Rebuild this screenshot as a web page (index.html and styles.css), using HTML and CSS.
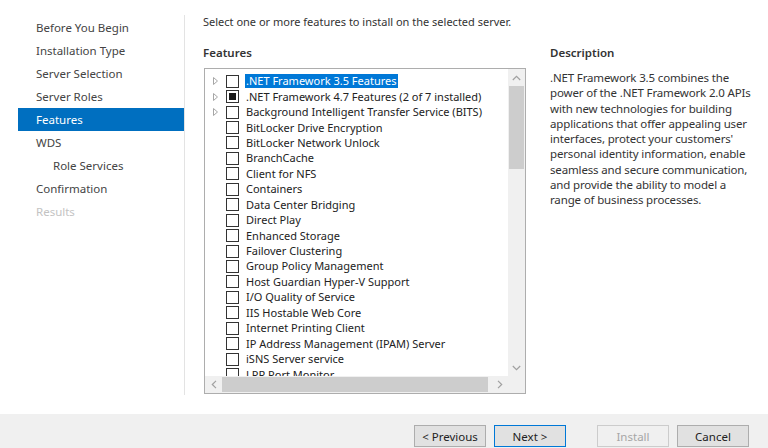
FILE: index.html
```html
<!DOCTYPE html>
<html>
<head>
<meta charset="utf-8">
<link rel="stylesheet" href="styles.css">
</head>
<body>
<div class="window">
  <div class="main">
    <nav class="steps">
      <div class="step">Before You Begin</div>
      <div class="step">Installation Type</div>
      <div class="step">Server Selection</div>
      <div class="step">Server Roles</div>
      <div class="step active">Features</div>
      <div class="step">WDS</div>
      <div class="step sub">Role Services</div>
      <div class="step">Confirmation</div>
      <div class="step disabled">Results</div>
    </nav>
    <section class="content">
      <p class="intro">Select one or more features to install on the selected server.</p>
      <div class="columns">
        <div class="features">
          <h2 class="heading">Features</h2>
          <div class="listbox">
            <div class="viewport">
              <ul class="tree">
                <li class="row"><span class="exp"><svg width="5" height="8" viewBox="0 0 5 8"><path d="M0.5 0.5 L4.5 4 L0.5 7.5 Z" fill="none" stroke="#a6a6a6"/></svg></span><span class="cb"></span><span class="label sel">.NET Framework 3.5 Features</span></li>
                <li class="row"><span class="exp"><svg width="5" height="8" viewBox="0 0 5 8"><path d="M0.5 0.5 L4.5 4 L0.5 7.5 Z" fill="none" stroke="#a6a6a6"/></svg></span><span class="cb partial"></span><span class="label">.NET Framework 4.7 Features (2 of 7 installed)</span></li>
                <li class="row"><span class="exp"><svg width="5" height="8" viewBox="0 0 5 8"><path d="M0.5 0.5 L4.5 4 L0.5 7.5 Z" fill="none" stroke="#a6a6a6"/></svg></span><span class="cb"></span><span class="label">Background Intelligent Transfer Service (BITS)</span></li>
                <li class="row"><span class="exp"></span><span class="cb"></span><span class="label">BitLocker Drive Encryption</span></li>
                <li class="row"><span class="exp"></span><span class="cb"></span><span class="label">BitLocker Network Unlock</span></li>
                <li class="row"><span class="exp"></span><span class="cb"></span><span class="label">BranchCache</span></li>
                <li class="row"><span class="exp"></span><span class="cb"></span><span class="label">Client for NFS</span></li>
                <li class="row"><span class="exp"></span><span class="cb"></span><span class="label">Containers</span></li>
                <li class="row"><span class="exp"></span><span class="cb"></span><span class="label">Data Center Bridging</span></li>
                <li class="row"><span class="exp"></span><span class="cb"></span><span class="label">Direct Play</span></li>
                <li class="row"><span class="exp"></span><span class="cb"></span><span class="label">Enhanced Storage</span></li>
                <li class="row"><span class="exp"></span><span class="cb"></span><span class="label">Failover Clustering</span></li>
                <li class="row"><span class="exp"></span><span class="cb"></span><span class="label">Group Policy Management</span></li>
                <li class="row"><span class="exp"></span><span class="cb"></span><span class="label">Host Guardian Hyper-V Support</span></li>
                <li class="row"><span class="exp"></span><span class="cb"></span><span class="label">I/O Quality of Service</span></li>
                <li class="row"><span class="exp"></span><span class="cb"></span><span class="label">IIS Hostable Web Core</span></li>
                <li class="row"><span class="exp"></span><span class="cb"></span><span class="label">Internet Printing Client</span></li>
                <li class="row"><span class="exp"></span><span class="cb"></span><span class="label">IP Address Management (IPAM) Server</span></li>
                <li class="row"><span class="exp"></span><span class="cb"></span><span class="label">iSNS Server service</span></li>
                <li class="row"><span class="exp"></span><span class="cb"></span><span class="label">LPR Port Monitor</span></li>
              </ul>
            </div>
            <div class="vscroll">
              <div class="arrow"><svg width="9" height="6" viewBox="0 0 9 6"><path d="M0.8 5 L4.5 1.3 L8.2 5" fill="none" stroke="#a0a0a0" stroke-width="1.2"/></svg></div>
              <div class="vtrack"><div class="vthumb"></div></div>
              <div class="arrow"><svg width="9" height="6" viewBox="0 0 9 6"><path d="M0.8 1 L4.5 4.7 L8.2 1" fill="none" stroke="#a0a0a0" stroke-width="1.2"/></svg></div>
            </div>
            <div class="hscroll">
              <div class="arrow"><svg width="6" height="9" viewBox="0 0 6 9"><path d="M5 0.8 L1.3 4.5 L5 8.2" fill="none" stroke="#a0a0a0" stroke-width="1.2"/></svg></div>
              <div class="htrack"><div class="hthumb"></div></div>
              <div class="arrow"><svg width="6" height="9" viewBox="0 0 6 9"><path d="M1 0.8 L4.7 4.5 L1 8.2" fill="none" stroke="#a0a0a0" stroke-width="1.2"/></svg></div>
            </div>
            <div class="corner"></div>
          </div>
        </div>
        <div class="desc">
          <h2 class="heading">Description</h2>
          <p class="desc-text">.NET Framework 3.5 combines the power of the .NET Framework 2.0 APIs with new technologies for building applications that offer appealing user interfaces, protect your customers' personal identity information, enable seamless and secure communication, and provide the ability to model a range of business processes.</p>
        </div>
      </div>
    </section>
  </div>
  <footer class="footer">
    <button class="btn">&lt; Previous</button>
    <button class="btn default">Next &gt;</button>
    <button class="btn disabled gap">Install</button>
    <button class="btn">Cancel</button>
  </footer>
</div>
</body>
</html>
```

FILE: styles.css
```css
* { box-sizing: border-box; }
html, body { margin: 0; padding: 0; }
body {
  width: 768px;
  height: 448px;
  overflow: hidden;
  background: #ffffff;
  font-family: "Noto Sans", "Open Sans", sans-serif;
  font-size: 11.5px;
  color: #333333;
}
.window { display: flex; flex-direction: column; height: 448px; }
.main { display: flex; height: 414px; }

.steps {
  width: 185px;
  margin-top: 15px;
  height: 380px;
  padding-top: 1px;
  padding-left: 18px;
  border-right: 1px solid #e3e3e3;
  flex-shrink: 0;
}
.step {
  height: 23px;
  line-height: 23px;
  padding-left: 18px;
  color: #444444;
  white-space: nowrap;
}
.step.active { background: #006fc0; color: #ffffff; }
.step.sub { padding-left: 35px; }
.step.disabled { color: #c3c3c3; }

.content { padding-left: 18px; flex: 1; }
.intro { margin: 14px 0 0 0; line-height: 16px; font-size: 11px; color: #333; }
.columns { display: flex; margin-top: 15px; }
.heading { margin: 0; font-size: 11.5px; font-weight: 600; line-height: 16px; color: #333; }
.features { width: 323px; }
.listbox {
  margin-top: 7px;
  margin-left: 1px;
  width: 322px;
  height: 326px;
  border: 1px solid #adadad;
  display: grid;
  grid-template-columns: 303px 17px;
  grid-template-rows: 307px 17px;
}
.viewport { overflow: hidden; padding-top: 4.5px; }
.tree { list-style: none; margin: 0; padding: 0; }
.row {
  display: flex;
  align-items: center;
  height: 15.44px;
  white-space: nowrap;
  font-size: 11px;
}
.exp { width: 21px; padding-left: 8px; display: flex; align-items: center; height: 8px; }
.exp svg { display: block; }
.cb {
  width: 13px; height: 13px;
  border: 1px solid #333333;
  background: #fff;
  flex-shrink: 0;
  display: flex; align-items: center; justify-content: center;
}
.cb.partial::after { content: ""; width: 7px; height: 7px; background: #1a1a1a; }
.label { margin-left: 6px; padding: 0 1px; line-height: 14px; color: #222; }
.label.sel { background: #0078d7; color: #ffffff; }

.vscroll { background: #f0f0f0; display: flex; flex-direction: column; }
.arrow { width: 17px; height: 17px; display: flex; align-items: center; justify-content: center; flex-shrink: 0; }
.vtrack { flex: 1; }
.vthumb { margin: 0 1px; height: 83px; background: #cdcdcd; }
.hscroll { background: #f0f0f0; display: flex; }
.htrack { flex: 1; display: flex; align-items: stretch; padding: 1px 0; }
.hthumb { width: 266px; background: #cdcdcd; }
.corner { background: #f0f0f0; }

.desc { margin-left: 24px; width: 202px; }
.desc-text { margin: 9px 0 0 0; line-height: 15.3px; letter-spacing: -0.15px; color: #333; }

.footer {
  height: 34px;
  background: #f0f0f0;
  display: flex;
  align-items: flex-start;
  padding: 11px 19px 0 0;
  justify-content: flex-end;
}
.btn {
  width: 72px;
  height: 22px;
  margin-left: 8px;
  font-family: inherit;
  font-size: 11.5px;
  color: #222;
  background: #e1e1e1;
  border: 1px solid #adadad;
  padding: 0;
}
.btn.default { border-color: #0078d7; }
.btn.gap { margin-left: 31px; }
.btn.disabled { background: #f0f0f0; border-color: #cccccc; color: #a6a6a6; }
```
